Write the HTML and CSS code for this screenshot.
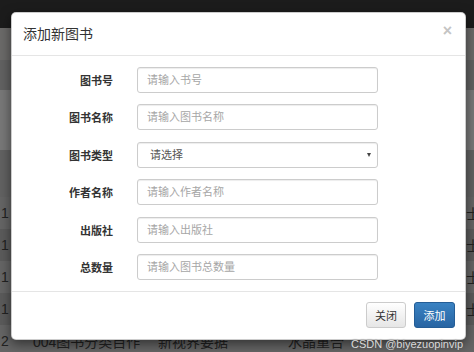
FILE: index.html
```html
<!DOCTYPE html>
<html lang="zh-CN">
  <head>
    <meta charset="UTF-8" />
    <meta name="viewport" content="width=device-width, initial-scale=1.0" />
    <title>图书管理</title>
    <link rel="stylesheet" href="styles.css">
  </head>
  <body>
    <div class="page">
      <div class="topbar"></div>
      <div class="band band-a"></div>
      <div class="band band-b"></div>
      <div class="band band-c"></div>
      <div class="band band-d"></div>
      <ul class="book-rows">
        <li class="book-row"><span class="cell-id">1</span><span class="cell-end">士</span></li>
        <li class="book-row"><span class="cell-id">1</span><span class="cell-end">士</span></li>
        <li class="book-row"><span class="cell-id">1</span><span class="cell-end">士</span></li>
        <li class="book-row"><span class="cell-id">1</span><span class="cell-end">士</span></li>
        <li class="book-row">
          <span class="cell-id">2</span>
          <span class="cell-name">004图书分类目作</span>
          <span class="cell-type">新视界要据</span>
          <span class="cell-author">水晶重合</span>
        </li>
      </ul>
    </div>

    <div class="backdrop"></div>

    <div class="modal">
      <div class="modal-header">
        <h4 class="modal-title">添加新图书</h4>
        <button class="close" type="button">×</button>
      </div>
      <form class="modal-body book-form">
        <label for="bookId">图书号</label>
        <input type="text" id="bookId" placeholder="请输入书号" />

        <label for="bookName">图书名称</label>
        <input type="text" id="bookName" placeholder="请输入图书名称" />

        <label for="bookType">图书类型</label>
        <div class="select-wrap">
          <select id="bookType">
            <option>请选择</option>
          </select>
        </div>

        <label for="author">作者名称</label>
        <input type="text" id="author" placeholder="请输入作者名称" />

        <label for="press">出版社</label>
        <input type="text" id="press" placeholder="请输入出版社" />

        <label for="total">总数量</label>
        <input type="text" id="total" placeholder="请输入图书总数量" />
      </form>
      <div class="modal-footer">
        <button class="btn btn-default" type="button">关闭</button>
        <button class="btn btn-primary" type="button">添加</button>
      </div>
    </div>

    <div class="watermark">CSDN @biyezuopinvip</div>
  </body>
</html>
```

FILE: styles.css
```css
body {
  margin: 0;
  padding: 0;
  width: 474px;
  height: 352px;
  overflow: hidden;
  font-family: "Liberation Sans", "Noto Sans CJK SC", sans-serif;
  font-size: 11px;
  color: #333;
  background-color: #b8b8b8;
}

/* page under the backdrop */
.page {
  display: flex;
  flex-direction: column;
}

.topbar {
  height: 28px;
  background-color: #383838;
}

.band-a {
  height: 32px;
  background-color: #d6d4d2;
}

.band-b {
  height: 30px;
  background-color: #c4c4c4;
}

.band-c {
  height: 60px;
  background-color: #f0f0f0;
}

.band-d {
  height: 47px;
  background-color: #c4c4c4;
}

.book-rows {
  list-style: none;
  margin: 0;
  padding: 0;
}

.book-row {
  display: flex;
  align-items: center;
  height: 32px;
  background-color: #cacaca;
  color: #444;
  font-size: 14px;
}

.book-row:nth-child(even) {
  background-color: #b6b6b6;
}

.cell-id {
  width: 32px;
  padding-left: 1px;
}

.cell-name {
  width: 125px;
}

.cell-type {
  width: 130px;
}

.cell-author {
  width: 100px;
}

.cell-end {
  margin-left: auto;
  margin-right: -6px;
}

.backdrop {
  position: absolute;
  inset: 0;
  background-color: rgba(0, 0, 0, 0.5);
}

/* modal */
.modal {
  position: absolute;
  top: 12px;
  left: 11px;
  width: 453px;
  background-color: #fff;
  border: 1px solid rgba(0, 0, 0, 0.2);
  border-radius: 5px;
  box-shadow: 0 4px 12px rgba(0, 0, 0, 0.5);
}

.modal-header {
  display: flex;
  align-items: center;
  justify-content: space-between;
  padding: 11px 12px 11px 11px;
  border-bottom: 1px solid #e5e5e5;
}

.modal-title {
  margin: 0;
  font-size: 14px;
  line-height: 20px;
  font-weight: normal;
  color: #333;
}

.close {
  margin-top: -6px;
  margin-right: 1px;
  padding: 0;
  border: none;
  background: none;
  font-family: "Liberation Sans", sans-serif;
  font-size: 16px;
  font-weight: bold;
  line-height: 1;
  color: #c4c4c4;
  cursor: pointer;
}

.book-form {
  display: grid;
  grid-template-columns: 90px 241px;
  column-gap: 24px;
  row-gap: 11.4px;
  align-items: center;
  padding: 11px;
  margin: 0;
}

.book-form label {
  text-align: right;
  font-weight: bold;
  color: #333;
}

.book-form input,
.book-form select {
  box-sizing: border-box;
  width: 100%;
  height: 26px;
  margin: 0;
  padding: 0 9px;
  font-family: inherit;
  font-size: 11px;
  color: #555;
  background-color: #fff;
  border: 1px solid #ccc;
  border-radius: 3px;
  box-shadow: inset 0 1px 1px rgba(0, 0, 0, 0.075);
  outline: none;
}

.book-form input::placeholder {
  color: #a6a6a6;
}

.select-wrap {
  position: relative;
}

.book-form select {
  appearance: none;
  -webkit-appearance: none;
  padding-left: 12px;
  color: #555;
}

.select-wrap::after {
  content: "";
  position: absolute;
  top: 11px;
  right: 7px;
  border-left: 2.5px solid transparent;
  border-right: 2.5px solid transparent;
  border-top: 4px solid #444;
}

.modal-footer {
  display: flex;
  justify-content: flex-end;
  gap: 8px;
  padding: 10px 10px 11px;
  border-top: 1px solid #e5e5e5;
}

.btn {
  box-sizing: border-box;
  height: 26px;
  padding: 0 8px;
  font-family: inherit;
  font-size: 11px;
  border-radius: 3px;
  cursor: pointer;
}

.btn-default {
  width: 40px;
  color: #333;
  background-color: #fff;
  background-image: linear-gradient(#fff, #e6e6e6);
  border: 1px solid #ccc;
}

.btn-primary {
  width: 41px;
  color: #fff;
  background-color: #2a6faf;
  background-image: linear-gradient(#3a82c2, #2865a3);
  border: 1px solid #245d96;
}

.watermark {
  position: absolute;
  right: 11px;
  bottom: 2px;
  font-family: "Liberation Sans", sans-serif;
  font-size: 11px;
  color: #d8d8d8;
  text-shadow: 0 0 2px #555;
}
```
